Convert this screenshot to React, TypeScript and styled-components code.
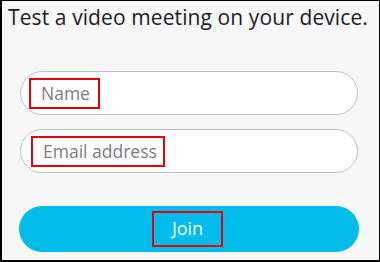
import React from 'react';
import styled, { createGlobalStyle } from 'styled-components';

const GlobalStyle = createGlobalStyle`
  html, body {
    margin: 0;
    padding: 0;
    background: #ffffff;
  }
  * {
    box-sizing: border-box;
  }
`;

const Frame = styled.div`
  width: 380px;
  height: 262px;
  background: #f7f7f7;
  border-top: 1px solid #000;
  border-left: 2px solid #000;
  border-right: 1px solid #000;
  border-bottom: 2px solid #000;
  font-family: 'Open Sans', 'Liberation Sans', sans-serif;
  display: flex;
  flex-direction: column;
`;

const Title = styled.h1`
  margin: 0;
  padding: 3px 0 0 6px;
  font-size: 21px;
  font-weight: 400;
  letter-spacing: 0.1px;
  color: #1c1c28;
  line-height: 27px;
  white-space: nowrap;
`;

const Form = styled.form`
  display: flex;
  flex-direction: column;
  padding: 40px 0 0 18px;
`;

const Field = styled.div<{ $gap?: number }>`
  width: 338px;
  height: 44px;
  margin-top: ${({ $gap }) => $gap ?? 0}px;
  background: #fff;
  border: 1px solid #c2c2c2;
  border-radius: 22px;
  display: flex;
  align-items: center;
  padding-left: ${({ $gap }) => ($gap ? 10 : 8)}px;
`;

const Highlight = styled.span<{ $width: number }>`
  width: ${({ $width }) => $width}px;
  height: 31px;
  border: 2px solid #e8000b;
  display: flex;
  align-items: center;
  padding-left: 10px;
  font-size: 17.5px;
  color: #7c7c84;
`;

const JoinButton = styled.button`
  margin-top: 33px;
  width: 340px;
  height: 46px;
  margin-left: -1px;
  border: none;
  border-radius: 23px;
  background: #02bceb;
  display: flex;
  align-items: center;
  justify-content: center;
  padding: 0;
  font-family: inherit;
`;

const JoinLabel = styled.span`
  width: 71px;
  height: 36px;
  border: 2px solid #e8000b;
  display: flex;
  align-items: center;
  justify-content: center;
  font-size: 18px;
  font-weight: 500;
  color: #fff;
  margin-left: -3px;
  padding-bottom: 2px;
`;

export default function App() {
  return (
    <>
      <GlobalStyle />
      <Frame>
        <Title>Test a video meeting on your device.</Title>
        <Form onSubmit={(e) => e.preventDefault()}>
          <Field>
            <Highlight $width={71}>Name</Highlight>
          </Field>
          <Field $gap={14}>
            <Highlight $width={134}>Email address</Highlight>
          </Field>
          <JoinButton type="submit">
            <JoinLabel>Join</JoinLabel>
          </JoinButton>
        </Form>
      </Frame>
    </>
  );
}
